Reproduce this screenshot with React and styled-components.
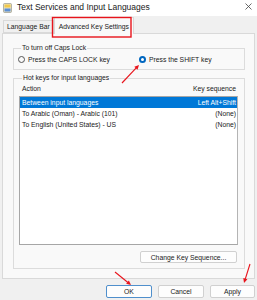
import React from "react";
import styled, { createGlobalStyle } from "styled-components";

const Global = createGlobalStyle`
  html, body { margin: 0; padding: 0; }
  body {
    width: 257px; height: 300px; overflow: hidden;
    background: #f0f0f0;
    font-family: "Liberation Sans", Arial, sans-serif;
    color: #1a1a1a;
  }
  * { box-sizing: border-box; }
`;

const Window = styled.div`
  position: relative;
  width: 257px;
  height: 300px;
  display: flex;
  flex-direction: column;
  background: #f0f0f0;
`;

const TitleBar = styled.div`
  height: 16px;
  background: #ffffff;
  display: flex;
  align-items: center;
  padding: 0 3px 0 3px;
  gap: 5px;
`;

const Title = styled.span`
  font-size: 8.5px;
  line-height: 10px;
  flex: 1;
  margin-top: -2px;
`;

const Close = styled.svg`
  width: 7px;
  height: 7px;
  margin-right: 2px;
  margin-top: -3px;
`;

const TabStrip = styled.div`
  height: 17px;
  display: flex;
  align-items: flex-end;
  padding-left: 3px;
`;

const Tab = styled.div`
  position: relative;
  z-index: ${(p) => (p.$active ? 2 : 1)};
  height: ${(p) => (p.$active ? "17px" : "13px")};
  margin-bottom: ${(p) => (p.$active ? "-1px" : "0")};
  padding: 0 ${(p) => (p.$active ? "4px" : "3px")};
  display: flex;
  align-items: center;
  font-size: 6.8px;
  background: ${(p) => (p.$active ? "#f9f9f9" : "#f0f0f0")};
  border: 1px solid #d9d9d9;
  border-bottom: ${(p) => (p.$active ? "none" : "1px solid #d9d9d9")};
  white-space: nowrap;
`;

const Panel = styled.div`
  height: 246px;
  margin: 0 2px;
  border: 1px solid #d9d9d9;
  background: #f9f9f9;
  padding: 10px 9px 9px 10px;
  display: flex;
  flex-direction: column;
  gap: 4px;
`;

const Group = styled.fieldset`
  margin: 0;
  border: 1px solid #dcdcdc;
  padding: ${(p) => p.$pad};
  min-width: 0;
  display: flex;
  flex-direction: column;
  flex: ${(p) => (p.$grow ? 1 : "none")};
`;

const Legend = styled.legend`
  font-size: 6.8px;
  line-height: 8px;
  padding: 0 1px;
  margin-left: 3px;
`;

const RadioRow = styled.div`
  display: grid;
  grid-template-columns: 121px 1fr;
  height: 9px;
  align-items: center;
`;

const RadioLabel = styled.label`
  display: flex;
  align-items: center;
  gap: 3px;
  font-size: 6.8px;
  white-space: nowrap;
`;

const RadioDot = styled.span`
  width: 7px;
  height: 7px;
  border-radius: 50%;
  flex: none;
  border: ${(p) => (p.$checked ? "2px solid #0067c0" : "1px solid #555")};
  background: ${(p) => (p.$checked ? "#ffffff" : "#f9f9f9")};
`;

const Header = styled.div`
  display: flex;
  justify-content: space-between;
  font-size: 6.8px;
  line-height: 8px;
  padding: 3px 2px 3px 3px;
`;

const List = styled.div`
  height: 149px;
  background: #ffffff;
  border: 1px solid #a6a6a6;
  border-right-color: #b4b4b4;
`;

const Row = styled.div`
  height: 11px;
  display: flex;
  align-items: center;
  justify-content: space-between;
  padding: 0 1px 0 2px;
  font-size: 6.8px;
  white-space: nowrap;
  background: ${(p) => (p.$selected ? "#0078d7" : "transparent")};
  color: ${(p) => (p.$selected ? "#ffffff" : "#1a1a1a")};
`;

const Button = styled.button`
  font-family: "Liberation Sans", Arial, sans-serif;
  font-size: 6.8px;
  color: #1a1a1a;
  height: ${(p) => p.$h || "13px"};
  width: ${(p) => p.$w};
  padding: 0;
  background: #fdfdfd;
  border: 1px solid ${(p) => (p.$default ? "#4f8fcc" : "#d0d0d0")};
  border-radius: 2px;
  display: flex;
  align-items: center;
  justify-content: center;
`;

const ButtonRow = styled.div`
  display: flex;
  justify-content: flex-end;
  margin-top: 6px;
  padding-right: 1px;
`;

const Footer = styled.div`
  display: flex;
  justify-content: flex-end;
  gap: 6px;
  padding: 6px 2px 0 0;
`;

const Overlay = styled.svg`
  position: absolute;
  left: 0;
  top: 0;
  width: 257px;
  height: 300px;
  pointer-events: none;
  z-index: 10;
`;

const Arrow = ({ x1, y1, x2, y2 }) => {
  const a = Math.atan2(y2 - y1, x2 - x1);
  const l = 5;
  const s = 0.45;
  const p1 = [x2 - l * Math.cos(a - s), y2 - l * Math.sin(a - s)];
  const p2 = [x2 - l * Math.cos(a + s), y2 - l * Math.sin(a + s)];
  return (
    <g>
      <line x1={x1} y1={y1} x2={x2 - 2 * Math.cos(a)} y2={y2 - 2 * Math.sin(a)} stroke="#e8141c" strokeWidth="1.1" />
      <polygon points={`${x2},${y2} ${p1[0]},${p1[1]} ${p2[0]},${p2[1]}`} fill="#e8141c" />
    </g>
  );
};

const AppIcon = () => (
  <svg width="9" height="10" viewBox="0 0 9 10">
    <rect x="0.5" y="0.5" width="8" height="9" rx="1" fill="#e9e2c4" stroke="#8a8a7a" strokeWidth="0.6" />
    <rect x="1.5" y="1.5" width="6" height="3" fill="#f2c94c" />
    <rect x="1.5" y="5.5" width="6" height="3" fill="#5b8fd6" />
  </svg>
);

const rows = [
  { a: "Between input languages", k: "Left Alt+Shift", sel: true },
  { a: "To Arabic (Oman) - Arabic (101)", k: "(None)" },
  { a: "To English (United States) - US", k: "(None)" },
];

export default function App() {
  return (
    <Window>
      <Global />
      <TitleBar>
        <AppIcon />
        <Title>Text Services and Input Languages</Title>
        <Close viewBox="0 0 7 7">
          <path d="M0.5 0.5 L6.5 6.5 M6.5 0.5 L0.5 6.5" stroke="#444" strokeWidth="0.8" />
        </Close>
      </TitleBar>
      <TabStrip>
        <Tab>Language Bar</Tab>
        <Tab $active>Advanced Key Settings</Tab>
      </TabStrip>
      <Panel>
        <Group $pad="3px 4px 5px 4px">
          <Legend>To turn off Caps Lock</Legend>
          <RadioRow>
            <RadioLabel>
              <RadioDot />
              Press the CAPS LOCK key
            </RadioLabel>
            <RadioLabel>
              <RadioDot $checked />
              Press the SHIFT key
            </RadioLabel>
          </RadioRow>
        </Group>
        <Group $grow $pad="0 6px 4px 5px">
          <Legend>Hot keys for input languages</Legend>
          <Header>
            <span>Action</span>
            <span>Key sequence</span>
          </Header>
          <List>
            {rows.map((r) => (
              <Row key={r.a} $selected={r.sel}>
                <span>{r.a}</span>
                <span>{r.k}</span>
              </Row>
            ))}
          </List>
          <ButtonRow>
            <Button $w="97px" $h="12px">Change Key Sequence...</Button>
          </ButtonRow>
        </Group>
      </Panel>
      <Footer>
        <Button $w="46px" $default>OK</Button>
        <Button $w="46px">Cancel</Button>
        <Button $w="45px">Apply</Button>
      </Footer>
      <Overlay viewBox="0 0 257 300">
        <rect x="52.5" y="17.5" width="78.5" height="19.5" fill="none" stroke="#e8141c" strokeWidth="1.4" />
        <Arrow x1={122} y1={83} x2={139} y2={65} />
        <Arrow x1={115} y1={272} x2={131} y2={285} />
        <Arrow x1={250} y1={264} x2={244} y2={283} />
      </Overlay>
    </Window>
  );
}
